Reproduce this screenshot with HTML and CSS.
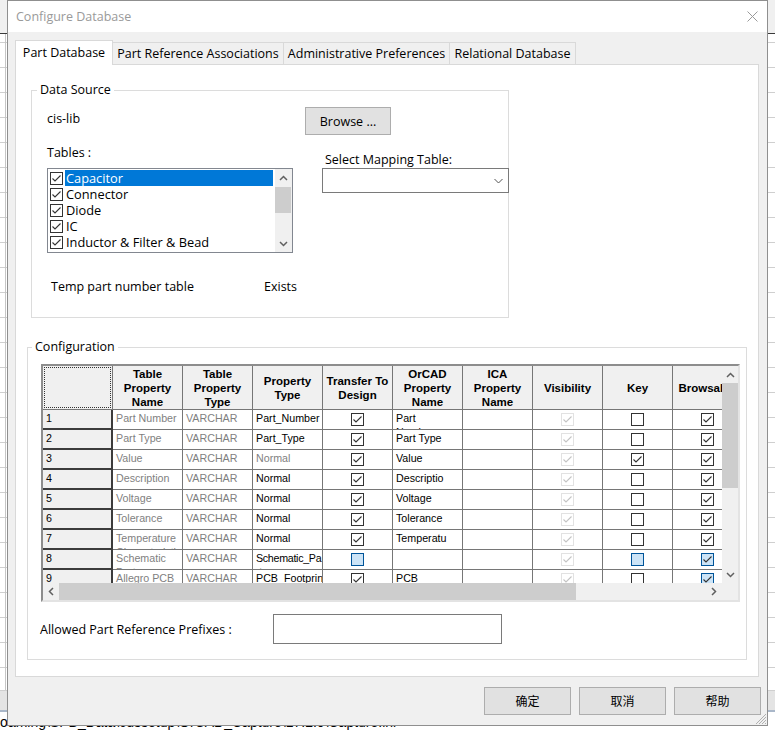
FILE: index.html
```html
<!DOCTYPE html>
<html>
<head>
<meta charset="utf-8">
<title>Configure Database</title>
<link rel="stylesheet" href="styles.css">
</head>
<body>
<div class="app">
  <div class="app-top"></div>
  <div class="app-sheet"></div>
  <div class="app-status"></div>
  <div class="app-path">Roaming\SPB_Data\cdssetup\OrCAD_Capture\17.2.0\Capture.ini</div>
</div>

<div class="dialog">
  <div class="titlebar">
    <span class="title">Configure Database</span>
    <svg class="close" width="11" height="11" viewBox="0 0 11 11"><path d="M0.5 0.5 L10.5 10.5 M10.5 0.5 L0.5 10.5" stroke="#9a9a9a" stroke-width="1" fill="none"/></svg>
  </div>
  <div class="dlg-body">
    <div class="tabs">
      <div class="tab active t1">Part Database</div>
      <div class="tab t2">Part Reference Associations</div>
      <div class="tab t3">Administrative Preferences</div>
      <div class="tab t4">Relational Database</div>
    </div>
    <div class="panel">
      <fieldset class="group ds">
        <legend>Data Source</legend>
        <div class="ds-cols">
          <div class="ds-left">
            <div class="lbl cislib">cis-lib</div>
            <div class="lbl tables-lbl">Tables :</div>
            <div class="listbox">
              <div class="list-items">
                <div class="li"><span class="cb"><svg viewBox="0 0 11 11"><polyline points="1.5,5.5 4,8 9.5,2.5"/></svg></span><span class="li-text sel">Capacitor</span></div>
                <div class="li"><span class="cb"><svg viewBox="0 0 11 11"><polyline points="1.5,5.5 4,8 9.5,2.5"/></svg></span><span class="li-text">Connector</span></div>
                <div class="li"><span class="cb"><svg viewBox="0 0 11 11"><polyline points="1.5,5.5 4,8 9.5,2.5"/></svg></span><span class="li-text">Diode</span></div>
                <div class="li"><span class="cb"><svg viewBox="0 0 11 11"><polyline points="1.5,5.5 4,8 9.5,2.5"/></svg></span><span class="li-text">IC</span></div>
                <div class="li"><span class="cb"><svg viewBox="0 0 11 11"><polyline points="1.5,5.5 4,8 9.5,2.5"/></svg></span><span class="li-text">Inductor &amp; Filter &amp; Bead</span></div>
              </div>
              <div class="sb-v small">
                <div class="sb-btn"><svg width="9" height="6" viewBox="0 0 9 6"><polyline points="1,5 4.5,1.5 8,5"/></svg></div>
                <div class="sb-thumb lthumb"></div>
                <div class="sb-fill"></div>
                <div class="sb-btn"><svg width="9" height="6" viewBox="0 0 9 6"><polyline points="1,1 4.5,4.5 8,1"/></svg></div>
              </div>
            </div>
            <div class="temp-row"><span class="temp-name">Temp part number table</span><span>Exists</span></div>
          </div>
          <div class="ds-right">
            <button class="btn browse">Browse ...</button>
            <div class="lbl map-lbl">Select Mapping Table:</div>
            <div class="combo"><svg width="9" height="6" viewBox="0 0 9 6"><polyline points="0.5,1 4.5,5 8.5,1"/></svg></div>
          </div>
        </div>
      </fieldset>

      <fieldset class="group cfg">
        <legend>Configuration</legend>
        <div class="grid-frame">
          <div class="grid-main">
            <div class="viewport">
              <div class="grow ghead">
                <div class="cell hc corner"><span class="focus"></span></div>
                <div class="cell hc">Table Property Name</div>
                <div class="cell hc">Table Property Type</div>
                <div class="cell hc">Property Type</div>
                <div class="cell hc">Transfer To Design</div>
                <div class="cell hc">OrCAD Property Name</div>
                <div class="cell hc">ICA Property Name</div>
                <div class="cell hc">Visibility</div>
                <div class="cell hc">Key</div>
                <div class="cell hc">Browsable</div>
              </div>

              <div class="grow">
                <div class="cell rh">1</div>
                <div class="cell g">Part Number</div>
                <div class="cell g">VARCHAR</div>
                <div class="cell wr">Part_Number</div>
                <div class="cell ctr"><span class="ck on"><svg viewBox="0 0 11 11"><polyline points="1.5,5.5 4,8 9.5,2.5"/></svg></span></div>
                <div class="cell wr n">Part Number</div>
                <div class="cell"></div>
                <div class="cell ctr"><span class="ck dis"><svg viewBox="0 0 11 11"><polyline points="1.5,5.5 4,8 9.5,2.5"/></svg></span></div>
                <div class="cell ctr"><span class="ck"></span></div>
                <div class="cell ctr"><span class="ck on"><svg viewBox="0 0 11 11"><polyline points="1.5,5.5 4,8 9.5,2.5"/></svg></span></div>
              </div>

              <div class="grow">
                <div class="cell rh">2</div>
                <div class="cell g">Part Type</div>
                <div class="cell g">VARCHAR</div>
                <div class="cell wr">Part_Type</div>
                <div class="cell ctr"><span class="ck on"><svg viewBox="0 0 11 11"><polyline points="1.5,5.5 4,8 9.5,2.5"/></svg></span></div>
                <div class="cell wr n">Part Type</div>
                <div class="cell"></div>
                <div class="cell ctr"><span class="ck dis"><svg viewBox="0 0 11 11"><polyline points="1.5,5.5 4,8 9.5,2.5"/></svg></span></div>
                <div class="cell ctr"><span class="ck"></span></div>
                <div class="cell ctr"><span class="ck on"><svg viewBox="0 0 11 11"><polyline points="1.5,5.5 4,8 9.5,2.5"/></svg></span></div>
              </div>

              <div class="grow">
                <div class="cell rh">3</div>
                <div class="cell g">Value</div>
                <div class="cell g">VARCHAR</div>
                <div class="cell wr g">Normal</div>
                <div class="cell ctr"><span class="ck on"><svg viewBox="0 0 11 11"><polyline points="1.5,5.5 4,8 9.5,2.5"/></svg></span></div>
                <div class="cell wr n">Value</div>
                <div class="cell"></div>
                <div class="cell ctr"><span class="ck dis"><svg viewBox="0 0 11 11"><polyline points="1.5,5.5 4,8 9.5,2.5"/></svg></span></div>
                <div class="cell ctr"><span class="ck on"><svg viewBox="0 0 11 11"><polyline points="1.5,5.5 4,8 9.5,2.5"/></svg></span></div>
                <div class="cell ctr"><span class="ck on"><svg viewBox="0 0 11 11"><polyline points="1.5,5.5 4,8 9.5,2.5"/></svg></span></div>
              </div>

              <div class="grow">
                <div class="cell rh">4</div>
                <div class="cell g">Description</div>
                <div class="cell g">VARCHAR</div>
                <div class="cell wr">Normal</div>
                <div class="cell ctr"><span class="ck on"><svg viewBox="0 0 11 11"><polyline points="1.5,5.5 4,8 9.5,2.5"/></svg></span></div>
                <div class="cell wr n">Description</div>
                <div class="cell"></div>
                <div class="cell ctr"><span class="ck dis"><svg viewBox="0 0 11 11"><polyline points="1.5,5.5 4,8 9.5,2.5"/></svg></span></div>
                <div class="cell ctr"><span class="ck"></span></div>
                <div class="cell ctr"><span class="ck on"><svg viewBox="0 0 11 11"><polyline points="1.5,5.5 4,8 9.5,2.5"/></svg></span></div>
              </div>

              <div class="grow">
                <div class="cell rh">5</div>
                <div class="cell g">Voltage</div>
                <div class="cell g">VARCHAR</div>
                <div class="cell wr">Normal</div>
                <div class="cell ctr"><span class="ck on"><svg viewBox="0 0 11 11"><polyline points="1.5,5.5 4,8 9.5,2.5"/></svg></span></div>
                <div class="cell wr n">Voltage</div>
                <div class="cell"></div>
                <div class="cell ctr"><span class="ck dis"><svg viewBox="0 0 11 11"><polyline points="1.5,5.5 4,8 9.5,2.5"/></svg></span></div>
                <div class="cell ctr"><span class="ck"></span></div>
                <div class="cell ctr"><span class="ck on"><svg viewBox="0 0 11 11"><polyline points="1.5,5.5 4,8 9.5,2.5"/></svg></span></div>
              </div>

              <div class="grow">
                <div class="cell rh">6</div>
                <div class="cell g">Tolerance</div>
                <div class="cell g">VARCHAR</div>
                <div class="cell wr">Normal</div>
                <div class="cell ctr"><span class="ck on"><svg viewBox="0 0 11 11"><polyline points="1.5,5.5 4,8 9.5,2.5"/></svg></span></div>
                <div class="cell wr n">Tolerance</div>
                <div class="cell"></div>
                <div class="cell ctr"><span class="ck dis"><svg viewBox="0 0 11 11"><polyline points="1.5,5.5 4,8 9.5,2.5"/></svg></span></div>
                <div class="cell ctr"><span class="ck"></span></div>
                <div class="cell ctr"><span class="ck on"><svg viewBox="0 0 11 11"><polyline points="1.5,5.5 4,8 9.5,2.5"/></svg></span></div>
              </div>

              <div class="grow">
                <div class="cell rh">7</div>
                <div class="cell g">Temperature Characteristic</div>
                <div class="cell g">VARCHAR</div>
                <div class="cell wr">Normal</div>
                <div class="cell ctr"><span class="ck on"><svg viewBox="0 0 11 11"><polyline points="1.5,5.5 4,8 9.5,2.5"/></svg></span></div>
                <div class="cell wr n">Temperature Characteristic</div>
                <div class="cell"></div>
                <div class="cell ctr"><span class="ck dis"><svg viewBox="0 0 11 11"><polyline points="1.5,5.5 4,8 9.5,2.5"/></svg></span></div>
                <div class="cell ctr"><span class="ck"></span></div>
                <div class="cell ctr"><span class="ck on"><svg viewBox="0 0 11 11"><polyline points="1.5,5.5 4,8 9.5,2.5"/></svg></span></div>
              </div>

              <div class="grow">
                <div class="cell rh">8</div>
                <div class="cell g">Schematic Part</div>
                <div class="cell g">VARCHAR</div>
                <div class="cell wr w4 tight">Schematic_Part</div>
                <div class="cell ctr"><span class="ck hot"></span></div>
                <div class="cell wr n"></div>
                <div class="cell"></div>
                <div class="cell ctr"><span class="ck dis"><svg viewBox="0 0 11 11"><polyline points="1.5,5.5 4,8 9.5,2.5"/></svg></span></div>
                <div class="cell ctr"><span class="ck hot"></span></div>
                <div class="cell ctr"><span class="ck hot"><svg viewBox="0 0 11 11"><polyline points="1.5,5.5 4,8 9.5,2.5"/></svg></span></div>
              </div>

              <div class="grow">
                <div class="cell rh">9</div>
                <div class="cell g">Allegro PCB Footprint</div>
                <div class="cell g">VARCHAR</div>
                <div class="cell nw">PCB_Footprint</div>
                <div class="cell ctr"><span class="ck on"><svg viewBox="0 0 11 11"><polyline points="1.5,5.5 4,8 9.5,2.5"/></svg></span></div>
                <div class="cell wr n">PCB Footprint</div>
                <div class="cell"></div>
                <div class="cell ctr"><span class="ck dis"><svg viewBox="0 0 11 11"><polyline points="1.5,5.5 4,8 9.5,2.5"/></svg></span></div>
                <div class="cell ctr"><span class="ck"></span></div>
                <div class="cell ctr"><span class="ck hot"><svg viewBox="0 0 11 11"><polyline points="1.5,5.5 4,8 9.5,2.5"/></svg></span></div>
              </div>
            </div>
            <div class="sb-v big">
              <div class="sb-btn"><svg width="9" height="6" viewBox="0 0 9 6"><polyline points="1,5 4.5,1.5 8,5"/></svg></div>
              <div class="sb-thumb gthumb"></div>
              <div class="sb-fill"></div>
              <div class="sb-btn"><svg width="9" height="6" viewBox="0 0 9 6"><polyline points="1,1 4.5,4.5 8,1"/></svg></div>
            </div>
          </div>
          <div class="grid-foot">
            <div class="sb-h">
              <div class="sb-btn h"><svg width="6" height="9" viewBox="0 0 6 9"><polyline points="5,1 1.5,4.5 5,8"/></svg></div>
              <div class="sb-thumb hthumb"></div>
              <div class="sb-fill"></div>
              <div class="sb-btn h"><svg width="6" height="9" viewBox="0 0 6 9"><polyline points="1,1 4.5,4.5 1,8"/></svg></div>
            </div>
            <div class="sb-corner"></div>
          </div>
        </div>
        <div class="prefix-row">
          <span class="prefix-lbl">Allowed Part Reference Prefixes :</span>
          <div class="textbox"></div>
        </div>
      </fieldset>
    </div>
    <div class="buttons">
      <button class="btn dbtn">确定</button>
      <button class="btn dbtn">取消</button>
      <button class="btn dbtn">帮助</button>
    </div>
  </div>
  <svg class="grip" width="12" height="12" viewBox="0 0 12 12"><path d="M11 1 L1 11 M11 4 L4 11 M11 7 L7 11 M11 10 L10 11" stroke="#b0b0b0" stroke-width="1" fill="none"/></svg>
</div>
</body>
</html>
```

FILE: styles.css
```css
* { box-sizing: border-box; }
html, body { margin: 0; padding: 0; }
body {
  width: 775px;
  height: 733px;
  overflow: hidden;
  position: relative;
  background: #fff;
  font-family: "Open Sans", "Noto Sans CJK SC", sans-serif;
  font-size: 12.5px;
  color: #000;
}

/* background application */
.app-top { height: 34px; background: #f0f0f0; border-bottom: 1px solid #3a3a3a; }
.app-sheet {
  height: 656px;
  background:
    linear-gradient(to right, transparent 5px, #c6c6c6 5px, #c6c6c6 6px, transparent 6px),
    repeating-linear-gradient(to bottom, transparent 0, transparent 8px, #cfcfcf 8px, #cfcfcf 9px, transparent 9px, transparent 25px);
}
.app-status { height: 22px; background: #e4e4e4; border-top: 1px solid #cfcfcf; border-bottom: 2px solid #a9b7c9; }
.app-path {
  font-family: "Liberation Sans", Arial, sans-serif;
  font-size: 14px;
  line-height: 20px;
  margin-left: -10px;
  white-space: nowrap;
}

/* dialog window */
.dialog {
  position: absolute;
  left: 7px;
  top: 0;
  width: 761px;
  height: 726px;
  border: 1px solid #8f8f8f;
  background: #f0f0f0;
  display: flex;
  flex-direction: column;
}
.titlebar {
  height: 31px;
  flex: none;
  background: #fff;
  display: flex;
  align-items: center;
  justify-content: space-between;
  padding: 0 9px 0 8px;
}
.title { color: #9a9a9a; font-size: 12.5px; }
.close { margin-top: -1px; }

.dlg-body { padding: 8px 8px 0 7px; }

.tabs { display: flex; align-items: flex-end; height: 24px; }
.tab {
  height: 22px;
  border: 1px solid #d9d9d9;
  border-bottom: none;
  background: #f0f0f0;
  margin-left: -1px;
  display: flex;
  align-items: center;
  justify-content: center;
  white-space: nowrap;
}
.tab.active {
  height: 25px;
  margin-left: 0;
  margin-bottom: -1px;
  background: #fff;
  position: relative;
  z-index: 1;
  padding-bottom: 1px;
}
.t1 { width: 98px; }
.t2 { width: 172px; }
.t3 { width: 167px; }
.t4 { width: 127px; }

.panel {
  height: 613px;
  border: 1px solid #d9d9d9;
  background: #fff;
  display: flow-root;
}

/* group boxes */
fieldset.group {
  padding: 0;
  border: 1px solid #dcdcdc;
  min-width: 0;
}
.group legend { padding: 0 3px; line-height: 16px; }
fieldset.ds { margin: 17px 0 0 15px; width: 478px; }
.ds legend { margin-left: 5px; }
fieldset.cfg { margin: 21px 0 0 11px; width: 720px; }
.cfg legend { margin-left: 4px; }

.lbl { line-height: 16px; white-space: nowrap; }

.ds-cols { display: flex; gap: 12px; margin-left: 15px; }
.ds-left { width: 246px; flex: none; }
.cislib { margin-top: 13px; }
.tables-lbl { margin-top: 18px; }

.listbox {
  margin-top: 7px;
  height: 85px;
  border: 1px solid #828790;
  display: flex;
  background: #fff;
}
.list-items { flex: 1; padding-top: 1px; }
.li { height: 16px; display: flex; align-items: center; font-size: 12.8px; }
.cb {
  width: 13px;
  height: 13px;
  border: 1px solid #333;
  margin: 0 2px 0 2px;
  flex: none;
  display: flex;
}
.cb svg, .ck svg { width: 11px; height: 11px; }
.cb polyline, .ck polyline { fill: none; stroke: #333; stroke-width: 1.1; }
.li-text { flex: 1; height: 16px; line-height: 16px; padding-left: 1px; margin-right: 2px; white-space: nowrap; }
.li-text.sel { background: #0078d7; color: #fff; }

.sb-v { width: 17px; background: #f0f0f0; display: flex; flex-direction: column; flex: none; }
.sb-v.big { width: 16px; height: 217px; }
.sb-btn { height: 17px; display: flex; align-items: center; justify-content: center; flex: none; }
.sb-btn.h { width: 16px; height: 17px; }
.sb-btn polyline { fill: none; stroke: #606060; stroke-width: 1.5; }
.sb-thumb { background: #cdcdcd; flex: none; }
.lthumb { height: 26px; margin: 1px 1px 0 0; }
.gthumb { height: 105px; }
.sb-fill { flex: 1; }

.temp-row { margin-top: 26px; margin-bottom: 22px; line-height: 16px; display: flex; white-space: nowrap; }
.temp-name { width: 217px; flex: none; padding-left: 4px; }

.ds-right { flex: 1; }
.btn {
  font-family: "Open Sans", "Noto Sans CJK SC", sans-serif;
  font-size: 12.5px;
  color: #000;
  background: #e1e1e1;
  border: 1px solid #adadad;
  padding: 0;
  margin: 0;
}
.browse { display: block; margin-top: 9px; width: 86px; height: 28px; }
.map-lbl { margin-top: 17px; padding-left: 20px; }
.combo {
  margin-left: 17px;
  width: 187px;
  height: 25px;
  border: 1px solid #7a7a7a;
  background: #fff;
  display: flex;
  align-items: center;
  justify-content: flex-end;
  padding-right: 5px;
}
.combo polyline { fill: none; stroke: #555; stroke-width: 1; }

/* data grid */
.grid-frame {
  margin: 9px 0 0 13px;
  width: 699px;
  border: 2px solid;
  border-color: #8d8d8d #e3e3e3 #e3e3e3 #8d8d8d;
  background: #fff;
}
.grid-main { display: flex; }
.viewport { width: 679px; height: 217px; overflow: hidden; }
.grow { display: grid; grid-template-columns: repeat(10, 70px); width: 700px; height: 20px; }
.grow.ghead { height: 44px; }
.cell {
  border-right: 1px solid #767676;
  border-bottom: 1px solid #767676;
  overflow: hidden;
  font-family: "Liberation Sans", Arial, sans-serif;
  font-size: 10.7px;
  line-height: 14px;
  padding: 1px 2px 0 3px;
  color: #000;
}
.cell.g { color: #7f7f7f; }
.cell.wr { overflow-wrap: anywhere; }
.cell.n { padding-right: 13.5px; }
.cell.w4 { padding-right: 0; }
.cell.tight { letter-spacing: -0.3px; }
.cell.nw { white-space: nowrap; padding-right: 0; }
.hc {
  background: #f0f0f0;
  font-weight: bold;
  font-size: 11.5px;
  line-height: 14px;
  text-align: center;
  display: flex;
  align-items: center;
  justify-content: center;
  padding: 0 2px;
}
.corner { position: relative; padding: 0; }
.focus { position: absolute; inset: 1px; border: 1px dotted #333; }
.rh {
  background: #f0f0f0;
  border-right-color: #3c3c3c;
  border-bottom-color: #3c3c3c;
  box-shadow: inset -1px -1px 0 #3c3c3c;
}
.ctr { display: flex; align-items: center; justify-content: center; padding: 0; }
.ck {
  width: 13px;
  height: 13px;
  border: 1px solid #333;
  background: #fff;
  display: flex;
}
.ck.dis { border-color: #e2e2e2; }
.ck.dis polyline { stroke: #c4c4c4; }
.ck.hot { border-color: #005499; background: #cce4f7; }

.grid-foot { display: flex; height: 17px; }
.sb-h { width: 679px; display: flex; background: #f0f0f0; }
.hthumb { width: 517px; }
.sb-corner { width: 16px; background: #f0f0f0; }

.prefix-row { display: flex; align-items: center; margin: 12px 0 15px 12px; }
.prefix-lbl { width: 233px; white-space: nowrap; }
.textbox { width: 229px; height: 30px; border: 1px solid #7a7a7a; background: #fff; }

.buttons { display: flex; justify-content: flex-end; gap: 8px; margin: 10px -2px 0 0; }
.dbtn { width: 87px; height: 28px; font-size: 12px; }

.grip { position: absolute; right: 0; bottom: 0; }
```
